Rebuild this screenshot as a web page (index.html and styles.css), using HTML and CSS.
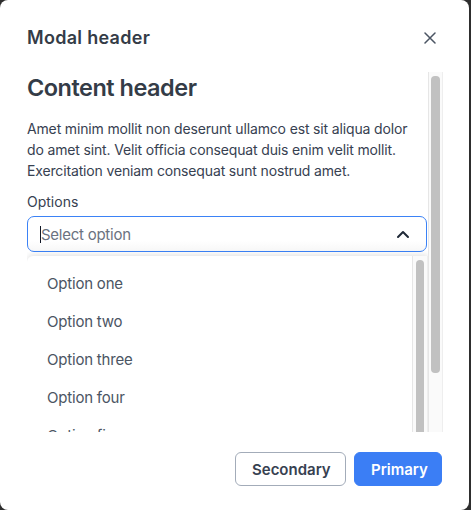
FILE: index.html
```html
<!DOCTYPE html>
<html lang="en">
<head>
<meta charset="utf-8">
<title>Modal</title>
<link rel="stylesheet" href="styles.css">
</head>
<body>
<div class="modal" role="dialog" aria-labelledby="modal-title">
  <header class="modal-header">
    <h2 id="modal-title" class="modal-title">Modal header</h2>
    <button class="close-btn" aria-label="Close">
      <svg width="12" height="12" viewBox="0 0 12 12" aria-hidden="true">
        <path d="M1 1L11 11M11 1L1 11" stroke="#4b5563" stroke-width="1.5" stroke-linecap="round" fill="none"/>
      </svg>
    </button>
  </header>
  <div class="modal-body">
    <div class="body-content">
      <h3 class="content-title">Content header</h3>
      <p class="content-text">Amet minim mollit non deserunt ullamco est sit aliqua dolor do amet sint. Velit officia consequat duis enim velit mollit. Exercitation veniam consequat sunt nostrud amet.</p>
      <label class="field-label">Options</label>
      <div class="select" role="combobox" aria-expanded="true">
        <span class="caret"></span>
        <span class="placeholder">Select option</span>
        <svg class="chevron" width="14" height="9" viewBox="0 0 14 9" aria-hidden="true">
          <path d="M2 7L7 2L12 7" stroke="#1f2937" stroke-width="2" stroke-linecap="round" stroke-linejoin="round" fill="none"/>
        </svg>
      </div>
      <div class="dropdown">
        <ul class="option-list" role="listbox">
          <li class="option">Option one</li>
          <li class="option">Option two</li>
          <li class="option">Option three</li>
          <li class="option">Option four</li>
          <li class="option">Option five</li>
          <li class="option">Option six</li>
          <li class="option">Option seven</li>
        </ul>
        <div class="scrollbar inner-bar"><div class="thumb inner-thumb"></div></div>
      </div>
    </div>
    <div class="scrollbar outer-bar"><div class="thumb outer-thumb"></div></div>
  </div>
  <footer class="modal-footer">
    <button class="btn btn-secondary">Secondary</button>
    <button class="btn btn-primary">Primary</button>
  </footer>
</div>
</body>
</html>
```
FILE: styles.css
```css
* { box-sizing: border-box; }

html, body {
  margin: 0;
  padding: 0;
  height: 100%;
}

body {
  background: #2e2e2e;
  font-family: Inter, "Noto Sans", "Liberation Sans", sans-serif;
  color: #374151;
  overflow: hidden;
}

.modal {
  width: 469px;
  height: 510px;
  background: #ffffff;
  border-radius: 8px;
  display: flex;
  flex-direction: column;
}

.modal-header {
  display: flex;
  align-items: center;
  justify-content: space-between;
  padding: 24px 27px 20px 27px;
}

.modal-title {
  margin: 0;
  font-size: 18px;
  line-height: 28px;
  font-weight: 600;
  letter-spacing: 0.3px;
  color: #343c47;
}

.close-btn {
  width: 24px;
  height: 24px;
  padding: 0;
  border: none;
  background: transparent;
  display: flex;
  align-items: center;
  justify-content: center;
}

.modal-body {
  margin-left: 27px;
  height: 360px;
  overflow: hidden;
  display: flex;
  align-items: stretch;
}

.body-content {
  width: 401px;
  flex: none;
}

.scrollbar {
  flex: none;
  background: #fafafa;
  border-left: 1px solid #e6e6e6;
  border-right: 1px solid #eeeeee;
}

.thumb {
  background: #c1c1c1;
  border-radius: 4px;
}

.outer-bar {
  width: 15px;
  padding: 4px 2px 0 2px;
}

.outer-thumb {
  height: 297px;
}

.inner-bar {
  width: 16px;
  padding: 4px 3px 0 3px;
}

.inner-thumb {
  height: 240px;
}

.content-title {
  margin: 0;
  font-size: 23.5px;
  line-height: 32px;
  font-weight: 600;
  letter-spacing: -0.5px;
  color: #343c47;
}

.content-text {
  margin: 14px 0 0 0;
  max-width: 390px;
  font-size: 14px;
  line-height: 21px;
  letter-spacing: -0.15px;
  color: #374151;
}

.field-label {
  display: block;
  margin-top: 11px;
  font-size: 14px;
  line-height: 20px;
  color: #374151;
}

.select {
  margin-top: 4px;
  width: 400px;
  height: 36px;
  border: 1px solid #3b82f6;
  border-radius: 7px;
  display: flex;
  align-items: center;
  padding: 0 16px 0 12px;
  background: linear-gradient(#ffffff 70%, #f7f7f7);
}

.caret {
  width: 1px;
  height: 17px;
  background: #111827;
}

.placeholder {
  flex: 1;
  font-size: 15px;
  letter-spacing: -0.25px;
  color: #6b7280;
}

.chevron {
  display: block;
}

.dropdown {
  margin-top: 4px;
  width: 401px;
  height: 252px;
  display: flex;
  border-radius: 6px 0 0 6px;
  background: #ffffff;
  box-shadow: 0 -2px 5px rgba(0, 0, 0, 0.07), 0 4px 12px rgba(0, 0, 0, 0.1);
  overflow: hidden;
}

.option-list {
  flex: 1;
  list-style: none;
  margin: 0;
  padding: 8px 0;
}

.option {
  height: 38px;
  display: flex;
  align-items: center;
  padding-left: 20px;
  font-size: 15px;
  letter-spacing: -0.2px;
  color: #4b5563;
}

.modal-footer {
  display: flex;
  justify-content: flex-end;
  gap: 8px;
  padding: 20px 27px 0 27px;
}

.btn {
  height: 34px;
  border-radius: 6px;
  font-family: inherit;
  font-size: 15px;
  font-weight: 600;
  padding: 0 16px;
}

.btn-secondary {
  width: 111px;
  background: #ffffff;
  border: 1px solid #a3acb9;
  color: #374151;
}

.btn-primary {
  width: 88px;
  background: #3b7ef5;
  border: 1px solid #3b7ef5;
  color: #ffffff;
}
```
